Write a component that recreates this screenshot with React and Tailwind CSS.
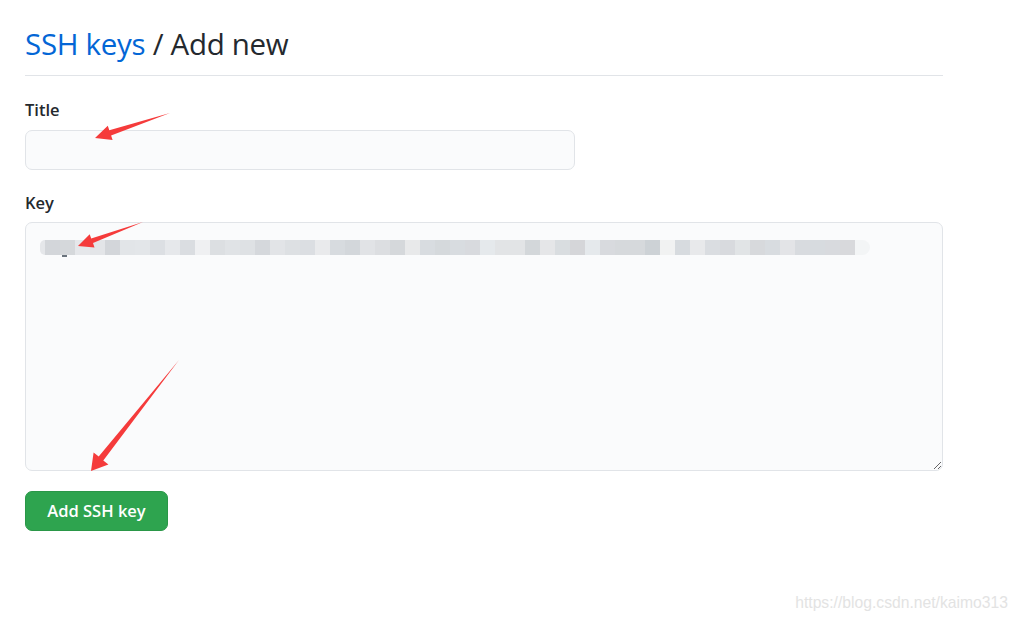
import React from "react";

const shades = [
  "#d3d6da","#d5d8db","#e5e7ea","#e3e5e8","#d3d6da","#e2e5e8","#e3e6e9","#dcdfe3","#e6e8eb","#dadde1",
  "#eff0f2","#dcdfe2","#e0e3e6","#dee1e4","#d5d8dc","#e2e4e7","#dde0e3","#dbdee2","#e9eaec","#d7dbdf",
  "#d3d7db","#e1e3e6","#dcdee1","#d5d8db","#e8e9ea","#d8dce0","#d5d9dc","#d8dce0","#d8dade","#e5e9ec",
  "#e2e4e6","#e2e4e6","#d3d7da","#e5e6e8","#d9dde0","#d5d6d9","#e5e9ec","#d8dade","#d6d9dc",
  "#d6d9dc","#cdd2d6","#f1f2f2","#d7dbdf","#e8e9eb","#dadde1","#d8dade","#e1e4e6","#d7d9dc","#d8dce0",
  "#e3e4e7","#d8dbdf","#d7dbdf","#d8dade","#d8d9dc",
];

export default function App() {
  return (
    <div className="relative w-[1018px] h-[623px] bg-white overflow-hidden" style={{ fontFamily: '"Open Sans", "Noto Sans", Arial, sans-serif' }}>
      <div className="w-[918px] ml-[25px] pt-[24px]">
        <div className="border-b border-[#e1e4e8] pb-[11px]">
          <h1 className="h-[40px] leading-[40px] text-[29.5px] font-normal text-[#24292e] tracking-[-0.3px]">
            <span className="text-[#0366d6]">SSH keys</span> / Add new
          </h1>
        </div>

        <div className="mt-[22px]">
          <div className="h-[24px] leading-[24px] text-[16.5px] font-semibold text-[#24292e]">Title</div>
          <input className="mt-[8px] block w-[550px] h-[40px] rounded-[7px] border border-[#e1e4e8] bg-[#fafbfc] outline-none" />
        </div>

        <div className="mt-[21px]">
          <div className="h-[24px] leading-[24px] text-[16.5px] font-semibold text-[#24292e]">Key</div>
          <div className="relative mt-[7px]">
            <textarea className="block w-[918px] h-[249px] rounded-[7px] border border-[#e1e4e8] bg-[#fafbfc] outline-none resize" />
            <div className="absolute left-[15px] top-[18px] flex h-[15px] pointer-events-none">
              <div className="w-[5px] h-[15px] rounded-l-full bg-[#e5e7ea]" />
              {shades.map((c, i) => (
                <div key={i} className="w-[15px] h-[15px]" style={{ backgroundColor: c }} />
              ))}
              <div className="w-[15px] h-[15px] rounded-r-full bg-[#f3f5f6]" />
            </div>
            <div className="absolute left-[37px] top-[33px] w-[5px] h-[2px] bg-[#6a737d] pointer-events-none" />
          </div>
        </div>

        <button className="mt-[20px] w-[143px] h-[40px] rounded-[7px] border border-[#2a9748] bg-[#2ea44f] text-white text-[16.5px] font-semibold">
          Add SSH key
        </button>
      </div>

      <svg className="absolute left-0 top-0 pointer-events-none" width="1018" height="623">
        <polygon fill="#f53b3b" points="95,138 112.6,140 111.1,135.6 170,113 109.3,130.2 107.8,125.8" />
        <polygon fill="#f53b3b" points="78,246 94.5,247.4 93,243.1 143,222 91.2,238.5 89.7,234.2" />
        <polygon fill="#f53b3b" points="91,471 108.4,464.4 103.3,460.4 179,360 98.7,456.6 93.6,452.6" />
      </svg>

      <div className="absolute right-[10px] bottom-[8px] text-[15.7px] text-[#e3e3e3]" style={{ fontFamily: '"Liberation Sans", Arial, sans-serif' }}>
        https://blog.csdn.net/kaimo313
      </div>
    </div>
  );
}
